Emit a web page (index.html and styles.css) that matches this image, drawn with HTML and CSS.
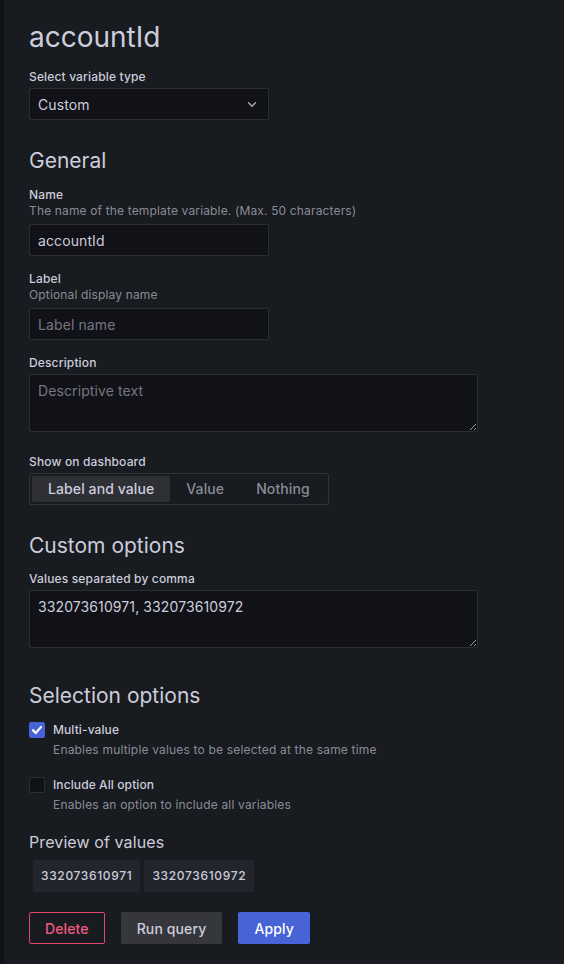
FILE: index.html
```html
<!DOCTYPE html>
<html lang="en">
<head>
<meta charset="utf-8">
<title>accountId</title>
<link rel="stylesheet" href="styles.css">
</head>
<body>
<div class="panel">
  <h1 class="title">accountId</h1>

  <div class="field">
    <label class="label">Select variable type</label>
    <div class="select">
      <span class="select-value">Custom</span>
      <svg class="chevron" width="16" height="16" viewBox="0 0 16 16"><path d="M4.6 6.8 L8 10.2 L11.4 6.8" fill="none" stroke="currentColor" stroke-width="1.5" stroke-linecap="round" stroke-linejoin="round"/></svg>
    </div>
  </div>

  <h3 class="section-title">General</h3>

  <div class="field">
    <label class="label label-with-desc">Name</label>
    <div class="desc">The name of the template variable. (Max. 50 characters)</div>
    <input class="input" type="text" value="accountId">
  </div>

  <div class="field">
    <label class="label label-with-desc">Label</label>
    <div class="desc">Optional display name</div>
    <input class="input" type="text" placeholder="Label name">
  </div>

  <div class="field field-tall">
    <label class="label">Description</label>
    <textarea class="textarea" placeholder="Descriptive text"></textarea>
  </div>

  <div class="field">
    <label class="label">Show on dashboard</label>
    <div class="radio-group">
      <span class="radio radio-active">Label and value</span>
      <span class="radio">Value</span>
      <span class="radio">Nothing</span>
    </div>
  </div>

  <h3 class="section-title section-title-tight">Custom options</h3>

  <div class="field field-tall">
    <label class="label">Values separated by comma</label>
    <textarea class="textarea">332073610971, 332073610972</textarea>
  </div>

  <h3 class="section-title">Selection options</h3>

  <div class="check-item">
    <div class="check-row">
      <span class="checkbox checkbox-on">
        <svg width="16" height="16" viewBox="0 0 16 16"><path d="M3.6 8.4 L6.6 11.3 L12.4 4.8" fill="none" stroke="#ffffff" stroke-width="2.4" stroke-linecap="square"/></svg>
      </span>
      <span class="check-label">Multi-value</span>
    </div>
    <div class="check-desc">Enables multiple values to be selected at the same time</div>
  </div>

  <div class="check-item">
    <div class="check-row">
      <span class="checkbox"></span>
      <span class="check-label">Include All option</span>
    </div>
    <div class="check-desc">Enables an option to include all variables</div>
  </div>

  <h5 class="preview-title">Preview of values</h5>
  <div class="chips">
    <span class="chip">332073610971</span>
    <span class="chip">332073610972</span>
  </div>

  <div class="actions">
    <button class="btn btn-delete">Delete</button>
    <button class="btn btn-secondary">Run query</button>
    <button class="btn btn-primary">Apply</button>
  </div>
</div>
</body>
</html>
```

FILE: styles.css
```css
* { box-sizing: border-box; }

html, body {
  margin: 0;
  padding: 0;
  background: #181b1f;
}

body {
  font-family: Inter, "Noto Sans", "Liberation Sans", sans-serif;
  color: #ccccdc;
  font-size: 14px;
}

.panel {
  display: flex;
  flex-direction: column;
  align-items: flex-start;
  border-left: 4px solid #111217;
  min-height: 964px;
  padding: 20px 25px 0 25px;
}

.title {
  margin: 0 0 15px 0;
  font-size: 28px;
  line-height: 34px;
  font-weight: 400;
  color: #ccccdc;
}

.field {
  margin-bottom: 15px;
}

.field-tall {
  margin-bottom: 22px;
}

.label {
  display: block;
  font-size: 12px;
  line-height: 15px;
  font-weight: 500;
  letter-spacing: 0.15px;
  color: #ccccdc;
  margin-bottom: 4px;
}

.label-with-desc {
  margin-bottom: 0;
}

.desc {
  font-size: 12px;
  line-height: 18px;
  letter-spacing: 0.15px;
  color: rgba(204, 204, 220, 0.65);
  margin-bottom: 4px;
}

.select {
  width: 240px;
  height: 32px;
  display: flex;
  align-items: center;
  justify-content: space-between;
  padding: 0 8px;
  background: #111217;
  border: 1px solid rgba(204, 204, 220, 0.15);
  border-radius: 2px;
}

.select-value {
  font-size: 14px;
  letter-spacing: 0.1px;
  color: #ccccdc;
}

.chevron {
  color: #a6a7b0;
  display: block;
}

.input {
  display: block;
  width: 240px;
  height: 32px;
  padding: 0 8px;
  background: #111217;
  border: 1px solid rgba(204, 204, 220, 0.15);
  border-radius: 2px;
  font-family: inherit;
  font-size: 14px;
  letter-spacing: 0.1px;
  color: #ccccdc;
  outline: none;
}

.input::placeholder,
.textarea::placeholder {
  color: rgba(204, 204, 220, 0.55);
}

.textarea {
  display: block;
  width: 449px;
  height: 58px;
  padding: 6px 8px;
  background: #111217;
  border: 1px solid rgba(204, 204, 220, 0.15);
  border-radius: 2px;
  font-family: inherit;
  font-size: 14px;
  line-height: 20px;
  letter-spacing: 0.1px;
  color: #ccccdc;
  outline: none;
  resize: both;
}

.radio-group {
  display: flex;
  height: 32px;
  padding: 2px;
  border: 1px solid rgba(204, 204, 220, 0.15);
  border-radius: 2px;
}

.radio {
  height: 26px;
  line-height: 26px;
  padding: 0 16px;
  font-size: 14px;
  font-weight: 500;
  letter-spacing: 0.1px;
  color: rgba(204, 204, 220, 0.65);
  border-radius: 2px;
}

.radio-active {
  background: #2e3036;
  color: #ccccdc;
}

.section-title {
  margin: 13px 0 13px 0;
  font-size: 21px;
  line-height: 26px;
  font-weight: 400;
  color: #ccccdc;
}

.section-title-tight {
  margin-bottom: 12px;
}

.check-item {
  margin-bottom: 18px;
}

.check-row {
  display: flex;
  align-items: center;
  gap: 8px;
  height: 16px;
}

.checkbox {
  width: 16px;
  height: 16px;
  flex: none;
  border-radius: 2px;
  background: #111217;
  border: 1px solid rgba(204, 204, 220, 0.15);
  display: flex;
  align-items: center;
  justify-content: center;
}

.checkbox svg { display: block; }

.checkbox-on {
  background: #4763d6;
  border-color: #4763d6;
}

.check-label {
  font-size: 12px;
  line-height: 16px;
  font-weight: 500;
  letter-spacing: 0.1px;
  color: #ccccdc;
}

.check-desc {
  margin-top: 3px;
  padding-left: 24px;
  font-size: 12px;
  line-height: 18px;
  letter-spacing: 0.18px;
  color: rgba(204, 204, 220, 0.65);
}

.preview-title {
  margin: 0 0 8px 0;
  font-size: 16px;
  line-height: 20px;
  font-weight: 400;
  letter-spacing: 0.1px;
  color: #ccccdc;
}

.chips {
  display: flex;
  gap: 4px;
  padding-left: 4px;
  margin-bottom: 20px;
}

.chip {
  height: 32px;
  line-height: 32px;
  padding: 0 8px;
  background: #22252b;
  border-radius: 2px;
  font-size: 12px;
  font-weight: 500;
  letter-spacing: 0.65px;
  color: #ccccdc;
}

.actions {
  display: flex;
  gap: 16px;
}

.btn {
  height: 32px;
  padding: 0 16px;
  border-radius: 2px;
  border: none;
  font-family: inherit;
  font-size: 14px;
  font-weight: 500;
  letter-spacing: 0.12px;
  cursor: pointer;
}

.btn-delete {
  background: transparent;
  border: 1px solid #e2466b;
  padding: 0 15px;
  color: #f25881;
}

.btn-secondary {
  background: #35373d;
  color: #ccccdc;
}

.btn-primary {
  background: #4763d6;
  color: #ffffff;
}
```
